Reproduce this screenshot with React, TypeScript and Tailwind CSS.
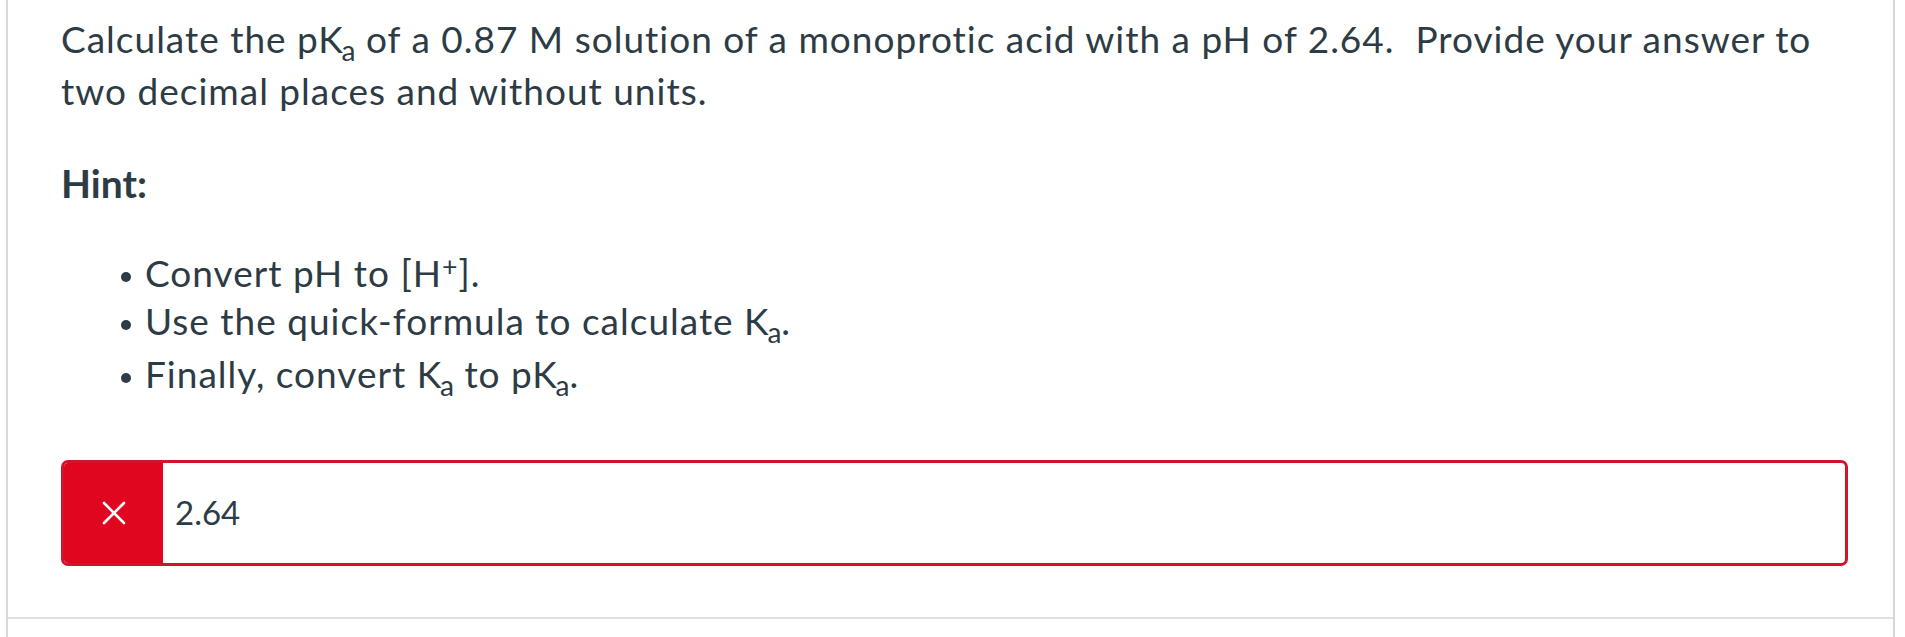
function Sub({ children }: { children: React.ReactNode }) {
  return (
    <span className="relative top-[0.3em] -ml-[0.08em] text-[0.76em] leading-none tracking-normal">{children}</span>
  );
}

function Bullet({ children, className = "" }: { children: React.ReactNode; className?: string }) {
  return (
    <li className={`flex items-start ${className}`}>
      <span className="mt-[23px] h-[10px] w-[10px] shrink-0 rounded-full bg-[#2d3b45]" />
      <span className="ml-[14px]">{children}</span>
    </li>
  );
}

export default function App() {
  return (
    <div className="min-h-screen bg-white font-['Lato','Liberation_Sans',sans-serif] text-[#2d3b45]">
      <div className="ml-[6px] mr-[10px] min-h-[637px] border-x-2 border-[#d5d9dc]">
        <div className="border-b-2 border-[#dde1e3] pl-[53px] pr-[45px] pt-[13px] pb-[51px]">
          <p className="text-[37px] leading-[52px] tracking-[1px]">
            Calculate the pK<Sub>a</Sub> of a 0.87 M solution of a monoprotic acid with a pH of 2.64.&nbsp; Provide your
            answer to two decimal places and without units.
          </p>
          <p className="mt-[40px] text-[39px] leading-[52px] font-bold">Hint:</p>
          <ul className="mt-[40px] ml-[60px] text-[37px] leading-[48px] tracking-[1px]">
            <Bullet>
              Convert pH to [H<span className="relative -top-[0.42em] text-[0.72em] leading-none">+</span>].
            </Bullet>
            <Bullet>
              Use the quick-formula to calculate K<Sub>a</Sub>.
            </Bullet>
            <Bullet className="mt-[5px]">
              Finally, convert K<Sub>a</Sub> to pK<Sub>a</Sub>.
            </Bullet>
          </ul>
          <div className="mt-[62px] flex h-[106px] overflow-hidden rounded-[7px] border-[3px] border-[#d0142c]">
            <div className="flex w-[99px] shrink-0 items-center justify-center bg-[#e0061f]">
              <svg width="24" height="24" viewBox="0 0 24 24" fill="none" stroke="white" strokeWidth="2.6" strokeLinecap="round">
                <path d="M2 2L22 22M22 2L2 22" />
              </svg>
            </div>
            <div className="flex flex-1 items-center pl-[12px] text-[33px]">2.64</div>
          </div>
        </div>
      </div>
    </div>
  );
}
